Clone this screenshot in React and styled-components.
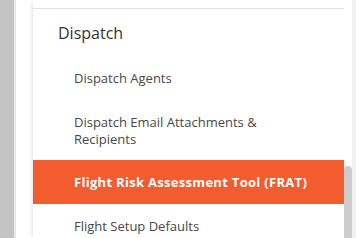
import React from 'react';
import styled, { createGlobalStyle } from 'styled-components';

const GlobalStyle = createGlobalStyle`
	*, *::before, *::after {
		box-sizing: border-box;
	}
	html, body {
		margin: 0;
		padding: 0;
		background: #ffffff;
		overflow: hidden;
	}
	body {
		font-family: 'Open Sans', 'Noto Sans', sans-serif;
	}
`;

const items = [
	{ label: 'Dispatch Agents' },
	{ label: 'Dispatch Email Attachments & Recipients' },
	{ label: 'Flight Risk Assessment Tool (FRAT)', active: true },
	{ label: 'Flight Setup Defaults' }
];

export default function App() {
	return (
		<>
			<GlobalStyle />
			<Page>
				<Rail />
				<Gutter />
				<Panel>
					<PrevItem />
					<SectionTitle>Dispatch</SectionTitle>
					<MenuList>
						{items.map((item) => (
							<MenuItem key={item.label} $active={item.active}>
								{item.label}
							</MenuItem>
						))}
					</MenuList>
				</Panel>
				<ScrollTrack>
					<ScrollThumb />
				</ScrollTrack>
				<Edge />
			</Page>
		</>
	);
}

const Page = styled.div`
	display: flex;
	height: 238px;
	width: 356px;
	overflow: hidden;
`;

const Rail = styled.div`
	width: 16px;
	flex-shrink: 0;
	background: #c3c3c3;
	border-right: 2px solid #e6e6e6;
`;

const Gutter = styled.div`
	width: 17px;
	flex-shrink: 0;
	background: #ffffff;
`;

const Panel = styled.div`
	width: 311px;
	flex-shrink: 0;
	background: #ffffff;
	box-shadow: -3px 0 4px -2px rgba(0, 0, 0, 0.12);
	display: flex;
	flex-direction: column;
`;

const PrevItem = styled.div`
	height: 9px;
	border-bottom: 1px solid #e2e2e2;
	flex-shrink: 0;
`;

const SectionTitle = styled.h3`
	margin: 0;
	flex-shrink: 0;
	padding: 13px 25px 0 25px;
	height: 47px;
	font-size: 16px;
	line-height: 22px;
	font-weight: 400;
	color: #333333;
`;

const MenuList = styled.ul`
	list-style: none;
	margin: 0;
	padding: 0;
	flex-shrink: 0;
`;

const MenuItem = styled.li`
	padding: 14px 40px 12.5px 41px;
	font-size: 13px;
	line-height: 17px;
	white-space: ${(p) => (p.$active ? 'nowrap' : 'normal')};
	letter-spacing: ${(p) => (p.$active ? '0.3px' : 'normal')};
	color: ${(p) => (p.$active ? '#ffffff' : '#484848')};
	background: ${(p) => (p.$active ? '#f25c2e' : 'transparent')};
	font-weight: ${(p) => (p.$active ? 700 : 400)};
`;

const ScrollTrack = styled.div`
	width: 8px;
	flex-shrink: 0;
	background: #ffffff;
	display: flex;
	flex-direction: column;
	padding-top: 166px;
`;

const ScrollThumb = styled.div`
	flex: 1;
	background: #cccccc;
	border-radius: 4px 4px 0 0;
`;

const Edge = styled.div`
	width: 4px;
	flex-shrink: 0;
	background: #f1f1f1;
`;
